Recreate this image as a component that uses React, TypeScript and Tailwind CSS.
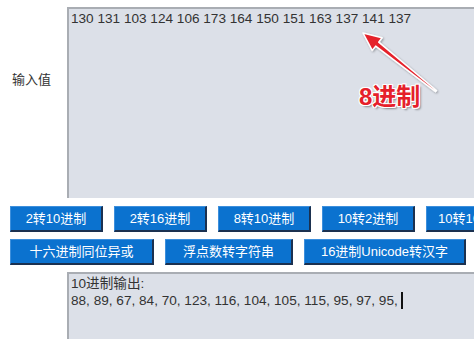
import React from 'react';

const row1 = ['2转10进制', '2转16进制', '8转10进制', '10转2进制', '10转16进制'];
const row2 = [
  { label: '十六进制同位异或', w: 'w-[144px]' },
  { label: '浮点数转字符串', w: 'w-[128px]' },
  { label: '16进制Unicode转汉字', w: 'w-[162px]' },
];

function Btn({ label, className }: { label: string; className: string }) {
  return (
    <button
      className={`${className} h-[26px] shrink-0 bg-[#0b72cf] text-white text-[13px] border-r-2 border-b-2 border-[#1b3150] border-t border-l border-t-[#3d8fdc] border-l-[#3d8fdc] flex items-center justify-center whitespace-nowrap`}
    >
      {label}
    </button>
  );
}

export default function App() {
  return (
    <div
      className="relative w-[474px] h-[339px] overflow-hidden bg-white text-[#333]"
      style={{ fontFamily: '"Liberation Sans", "Noto Sans CJK SC", sans-serif' }}
    >
      {/* input */}
      <div className="flex pt-[7px]">
        <div className="w-[67px] shrink-0 pt-[63px] pl-[12px] text-[13px] text-[#333]">输入值</div>
        <div className="h-[191px] flex-1 bg-[#dce0e8] border-l-2 border-t-2 border-[#a9adb3] pl-[2px] pt-[1px] text-[13.6px] leading-[18px]">
          130 131 103 124 106 173 164 150 151 163 137 141 137
        </div>
      </div>

      {/* buttons */}
      <div className="flex gap-[11px] pl-[10px] mt-[8px]">
        {row1.map((b) => (
          <Btn key={b} label={b} className="w-[93px]" />
        ))}
      </div>
      <div className="flex gap-[11px] pl-[10px] mt-[7px]">
        {row2.map((b) => (
          <Btn key={b.label} label={b.label} className={b.w} />
        ))}
      </div>

      {/* output */}
      <div className="flex mt-[7px]">
        <div className="w-[67px] shrink-0" />
        <div className="h-[80px] flex-1 bg-[#dce0e8] border-l-2 border-t-2 border-[#a9adb3] pl-[2px] pt-[2px] text-[13.6px] leading-[16px]">
          <div>10进制输出:</div>
          <div className="flex items-center">
            88, 89, 67, 84, 70, 123, 116, 104, 105, 115, 95, 97, 95,
            <span className="ml-[3px] inline-block w-[2px] h-[17px] bg-[#111]" />
          </div>
        </div>
      </div>

      {/* annotation */}
      <svg className="absolute left-0 top-0" width="474" height="339">
        <defs>
          <filter id="sh" x="-20%" y="-20%" width="140%" height="140%">
            <feDropShadow dx="1" dy="1" stdDeviation="1" floodColor="#000" floodOpacity="0.35" />
          </filter>
        </defs>
        <g filter="url(#sh)">
          <path
            d="M363 33 L382.1 37.8 L378.7 42.1 L436.4 90.5 L435.6 91.6 L375.7 46.1 L372.2 50.4 Z"
            fill="#e5202a"
            stroke="#fff"
            strokeWidth="1.5"
            strokeLinejoin="round"
          />
        </g>
      </svg>
      <div
        className="absolute left-[359px] top-[85px] text-[24px] font-bold text-[#e5202a] leading-none"
        style={{
          textShadow:
            '1px 0 #fff, -1px 0 #fff, 0 1px #fff, 0 -1px #fff, 1px 1px #fff, -1px -1px #fff, 1px -1px #fff, -1px 1px #fff, 2px 2px 2px rgba(0,0,0,0.4)',
        }}
      >
        8进制
      </div>
    </div>
  );
}
